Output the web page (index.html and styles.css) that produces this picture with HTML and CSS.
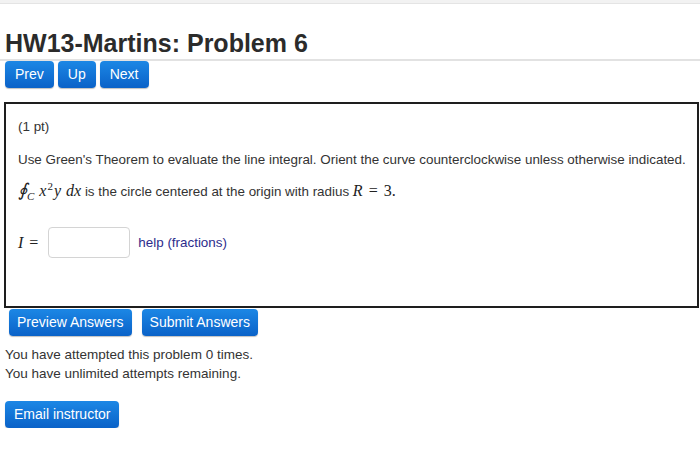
FILE: index.html
```html
<!DOCTYPE html>
<html lang="en">
<head>
    <meta charset="UTF-8">
    <title>HW13-Martins: Problem 6</title>
    <link rel="stylesheet" href="styles.css">
</head>
<body>
    <div class="topbar"></div>

    <div class="page">
        <h1>HW13-Martins: Problem 6</h1>
        <div class="nav">
            <a class="btn" href="#">Prev</a>
            <a class="btn" href="#">Up</a>
            <a class="btn" href="#">Next</a>
        </div>

        <div class="problem">
            <p class="points">(1 pt)</p>
            <p class="statement">Use Green's Theorem to evaluate the line integral. Orient the curve counterclockwise unless otherwise indicated.</p>
            <p class="statement math-line">
                <span class="math"><span class="oint">&#8750;</span><sub>C</sub><span class="var">x</span><sup>2</sup><span class="var">y</span><span class="var dx">dx</span></span>
                is the circle centered at the origin with radius
                <span class="math"><span class="var">R</span><span class="op">=</span>3.</span>
            </p>
            <div class="answer">
                <span class="math"><span class="var">I</span><span class="op">=</span></span>
                <input type="text" class="answer-box">
                <a class="help" href="#">help (fractions)</a>
            </div>
        </div>

        <div class="submit-row">
            <button class="btn">Preview Answers</button>
            <button class="btn">Submit Answers</button>
        </div>

        <p class="attempts">You have attempted this problem 0 times.<br>You have unlimited attempts remaining.</p>

        <button class="btn email">Email instructor</button>
    </div>
</body>
</html>
```

FILE: styles.css
```css
body {
    margin: 0;
    font-family: "Liberation Sans", Arial, sans-serif;
    color: #333;
    background-color: white;
}

.topbar {
    height: 3px;
    background-color: #f2f2f2;
    border-bottom: 1px solid #e4e4e4;
}

.page {
    padding: 0 1px 0 4px;
}

h1 {
    font-size: 25px;
    font-weight: bold;
    color: #2b2b2b;
    margin: 0 -1px 0 -4px;
    padding: 25px 0 1px 5px;
    line-height: 29px;
    border-bottom: 2px solid #e2e2e2;
}

.nav {
    display: flex;
    gap: 4px;
    padding: 0 0 0 1px;
}

.btn {
    display: inline-block;
    font-family: "Liberation Sans", Arial, sans-serif;
    font-size: 14px;
    color: white;
    text-decoration: none;
    line-height: 27px;
    padding: 0 10px;
    border: none;
    border-radius: 4px;
    background: linear-gradient(#1c87e5, #0a62c8);
    box-shadow: 0 1px 1px rgba(0, 0, 0, 0.25);
    cursor: pointer;
}

.problem {
    margin-top: 14px;
    border: 2px solid #1e1e1e;
    height: 202px;
    padding: 0 2px 0 12px;
    font-size: 13.4px;
}

.points {
    margin: 15px 0 0;
}

.statement {
    margin: 0;
    white-space: nowrap;
}

.points + .statement {
    margin-top: 18px;
}

.math-line {
    margin-top: 12px;
}

.math {
    font-family: "Liberation Serif", "Times New Roman", serif;
    font-size: 16px;
    color: #222;
}

.math .var {
    font-style: italic;
}

.math .oint {
    font-size: 18px;
    font-style: italic;
}

.math sub {
    font-size: 11px;
    font-style: italic;
    margin-right: 5px;
}

.math sup {
    font-size: 11px;
    margin: 0 1px;
}

.math .dx {
    margin-left: 5px;
}

.math .op {
    margin: 0 6px;
}

.answer {
    display: flex;
    align-items: center;
    margin-top: 25px;
}

.answer-box {
    width: 82px;
    height: 31px;
    margin: 0 8px 0 4px;
    padding: 0;
    border: 1px solid #d4d4d4;
    border-radius: 4px;
    box-sizing: border-box;
}

.help {
    color: #2c2c8c;
    text-decoration: none;
}

.submit-row {
    display: flex;
    gap: 10px;
    padding-left: 5px;
    margin-top: 1px;
}

.submit-row .btn {
    padding: 0 8px;
}

.attempts {
    font-size: 13.5px;
    line-height: 19px;
    margin: 9px 0 0 1px;
}

.email {
    margin: 18px 0 0 1px;
    padding: 0 9px;
}
```
